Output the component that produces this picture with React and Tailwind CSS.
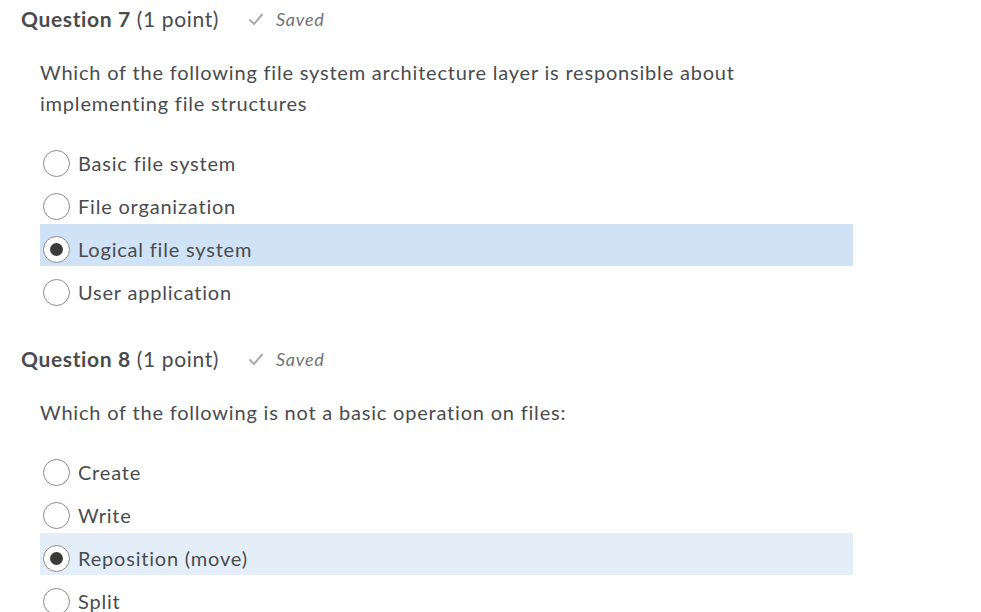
import React from "react";

const questions = [
  {
    num: 7,
    text: "Which of the following file system architecture layer is responsible about implementing file structures",
    options: ["Basic file system", "File organization", "Logical file system", "User application"],
    selected: 2,
    hl: "bg-[#cfe2f6]",
  },
  {
    num: 8,
    text: "Which of the following is not a basic operation on files:",
    options: ["Create", "Write", "Reposition (move)", "Split"],
    selected: 2,
    hl: "bg-[#e4eef9]",
  },
];

function Radio({ checked }) {
  return (
    <span className="flex h-[27px] w-[27px] shrink-0 items-center justify-center rounded-full border border-[#8a8a8a] bg-white">
      {checked && <span className="h-[13px] w-[13px] rounded-full bg-[#3a3a3a]" />}
    </span>
  );
}

function Question({ q }) {
  return (
    <div>
      <div className="flex h-[38px] items-center text-[21px] tracking-[0.03em] text-[#494c4e]">
        <span className="font-bold">Question {q.num}</span>
        <span className="ml-[6px]">(1 point)</span>
        <span className="ml-[29px] flex items-center text-[18px] italic tracking-[0.04em] text-[#6e7376]">
          <svg width="16" height="14" viewBox="0 0 16 14" className="mr-[12px]">
            <path d="M1.5 7.5 L6 12 L14.5 2" fill="none" stroke="#a9adb0" strokeWidth="2" />
          </svg>
          Saved
        </span>
      </div>
      <div className="mt-[19px] pl-[19px] pr-[200px] text-[20px] leading-[31px] tracking-[0.04em] text-[#494c4e]">
        {q.text}
      </div>
      <div className="mt-[19px] flex flex-col gap-[1px] pl-[19px]">
        {q.options.map((o, i) => (
          <div
            key={o}
            className={`flex h-[42px] w-[813px] items-center gap-[8px] pl-[3px] pt-[8px] text-[20px] tracking-[0.04em] text-[#494c4e] ${
              i === q.selected ? q.hl : ""
            }`}
          >
            <Radio checked={i === q.selected} />
            <span>{o}</span>
          </div>
        ))}
      </div>
    </div>
  );
}

export default function App() {
  return (
    <div className="h-[612px] w-[981px] overflow-hidden bg-white pl-[21px]" style={{ fontFamily: "Lato, sans-serif" }}>
      <div className="flex flex-col gap-[31px]">
        {questions.map((q) => (
          <Question key={q.num} q={q} />
        ))}
      </div>
    </div>
  );
}
